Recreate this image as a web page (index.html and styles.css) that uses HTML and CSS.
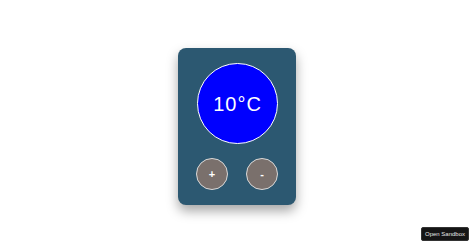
FILE: index.html
```html
<!DOCTYPE html>
<html>
<head>
<meta charset="utf-8">
<link rel="stylesheet" href="styles.css">
</head>
<body>
<div class="page">
  <div class="card">
    <div class="display">10°C</div>
    <div class="controls">
      <button class="btn">+</button>
      <button class="btn">-</button>
    </div>
  </div>
</div>
<a class="sandbox">Open Sandbox</a>
</body>
</html>
```
FILE: styles.css
```css
html, body {
  margin: 0;
  padding: 0;
  background: #ffffff;
  width: 474px;
  height: 248px;
  overflow: hidden;
  font-family: "Liberation Sans", Arial, sans-serif;
}
.page {
  display: flex;
  justify-content: center;
  padding-top: 48px;
}
.card {
  width: 118px;
  height: 157px;
  box-sizing: border-box;
  padding: 15px 0;
  background: #2c5871;
  border-radius: 8px;
  box-shadow: 0 6px 12px rgba(0, 0, 0, 0.35);
  display: flex;
  flex-direction: column;
  align-items: center;
}
.display {
  width: 79px;
  height: 77px;
  padding-top: 2px;
  border: 1px solid #ffffff;
  border-radius: 50%;
  background: #0000ff;
  color: #ffffff;
  font-size: 20px;
  letter-spacing: 1px;
  text-indent: 1px;
  display: flex;
  align-items: center;
  justify-content: center;
}
.controls {
  margin-top: 14px;
  display: flex;
  gap: 18px;
}
.btn {
  width: 32px;
  height: 32px;
  box-sizing: border-box;
  border: 1px solid #d9d9d9;
  border-radius: 50%;
  background: #7a706c;
  color: #ffffff;
  font-family: "Liberation Sans", Arial, sans-serif;
  font-size: 11px;
  font-weight: bold;
  padding: 0;
  display: flex;
  align-items: center;
  justify-content: center;
}
.sandbox {
  position: absolute;
  right: 5px;
  bottom: 7px;
  width: 48px;
  height: 14px;
  box-sizing: border-box;
  background: #151515;
  border: 1px solid #333;
  border-radius: 2px;
  color: #e6e6e6;
  font-size: 6px;
  display: flex;
  align-items: center;
  justify-content: center;
  white-space: nowrap;
}
```
